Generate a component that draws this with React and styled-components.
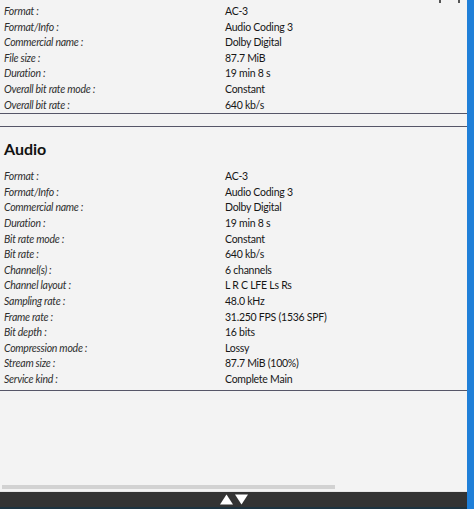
import React from "react";
import styled, { createGlobalStyle } from "styled-components";

const Global = createGlobalStyle`
  html, body { margin: 0; padding: 0; }
  body { width: 474px; height: 509px; overflow: hidden; background: #f3f3f3; font-family: Lato, "Noto Sans", sans-serif; }
`;

const Frame = styled.div`
  display: flex;
  width: 474px;
  height: 509px;
`;

const Main = styled.div`
  flex: 1;
  display: flex;
  flex-direction: column;
  min-width: 0;
`;

const Edge = styled.div`
  width: 7px;
  background: #1f7fd8;
`;

const Content = styled.div`
  flex: 1;
  position: relative;
  padding-top: 4px;
  overflow: hidden;
`;

const Section = styled.section`
  border-top: ${(p) => (p.$top ? "1px solid #565668" : "none")};
  border-bottom: 1px solid #565668;
  margin-bottom: 12px;
  padding-bottom: ${(p) => (p.$top ? "3px" : "0")};
`;

const Heading = styled.h2`
  margin: 0;
  padding: 13px 0 11px 4px;
  font-size: 16px;
  line-height: 18px;
  font-weight: 700;
  color: #111;
`;

const Row = styled.div`
  display: grid;
  grid-template-columns: 221px 1fr;
  height: 15.6px;
  align-items: center;
  padding-left: 4px;
  font-size: 10.5px;
  letter-spacing: -0.25px;
  line-height: 15.6px;
  white-space: nowrap;
`;

const Label = styled.span`
  font-style: italic;
  color: #2e2e2e;
`;

const Value = styled.span`
  color: #161616;
`;

const TopMarks = styled.svg`
  position: absolute;
  top: 0;
  right: 0;
`;

const HScroll = styled.div`
  height: 6px;
  padding: 0 0 0 2px;
  display: flex;
  align-items: flex-start;
`;

const Thumb = styled.div`
  width: 333px;
  height: 4px;
  background: #d2d2d2;
`;

const Divider = styled.div`
  height: 1px;
  background: #e6e6e6;
`;

const Bar = styled.div`
  height: 15px;
  background: #333333;
  border-bottom: 2px solid #1d3340;
  display: flex;
  justify-content: center;
  align-items: center;
`;

const general = [
  ["Format :", "AC-3"],
  ["Format/Info :", "Audio Coding 3"],
  ["Commercial name :", "Dolby Digital"],
  ["File size :", "87.7 MiB"],
  ["Duration :", "19 min 8 s"],
  ["Overall bit rate mode :", "Constant"],
  ["Overall bit rate :", "640 kb/s"],
];

const audio = [
  ["Format :", "AC-3"],
  ["Format/Info :", "Audio Coding 3"],
  ["Commercial name :", "Dolby Digital"],
  ["Duration :", "19 min 8 s"],
  ["Bit rate mode :", "Constant"],
  ["Bit rate :", "640 kb/s"],
  ["Channel(s) :", "6 channels"],
  ["Channel layout :", "L R C LFE Ls Rs"],
  ["Sampling rate :", "48.0 kHz"],
  ["Frame rate :", "31.250 FPS (1536 SPF)"],
  ["Bit depth :", "16 bits"],
  ["Compression mode :", "Lossy"],
  ["Stream size :", "87.7 MiB (100%)"],
  ["Service kind :", "Complete Main"],
];

const Rows = ({ items }) =>
  items.map(([l, v]) => (
    <Row key={l}>
      <Label>{l}</Label>
      <Value>{v}</Value>
    </Row>
  ));

export default function App() {
  return (
    <>
      <Global />
      <Frame>
        <Main>
          <Content>
            <TopMarks width="30" height="4" viewBox="0 0 30 4">
              <rect x="2" y="0" width="2" height="3" fill="#555" />
              <rect x="21" y="0" width="2" height="3" fill="#555" />
            </TopMarks>
            <Section>
              <Rows items={general} />
            </Section>
            <Section $top>
              <Heading>Audio</Heading>
              <Rows items={audio} />
            </Section>
          </Content>
          <HScroll>
            <Thumb />
          </HScroll>
          <Divider />
          <Bar>
            <svg width="28" height="11" viewBox="0 0 28 11">
              <polygon points="0,10.5 6.5,0.5 13,10.5" fill="#fff" />
              <polygon points="15,0.5 28,0.5 21.5,10.5" fill="#fff" />
            </svg>
          </Bar>
        </Main>
        <Edge />
      </Frame>
    </>
  );
}
